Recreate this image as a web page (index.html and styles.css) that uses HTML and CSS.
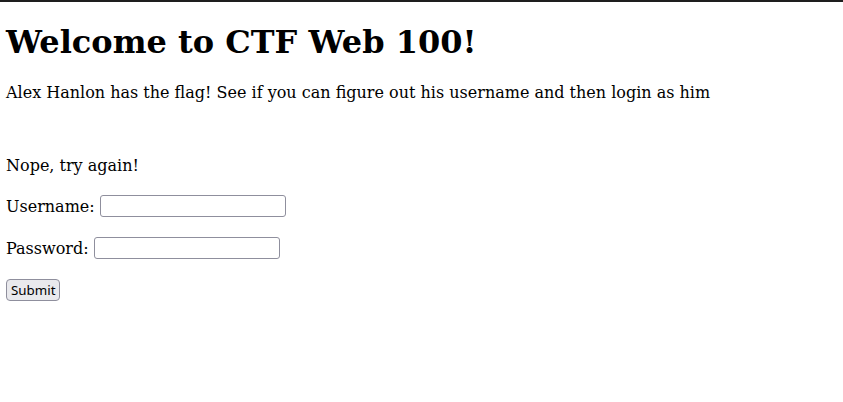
FILE: index.html
```html
<!DOCTYPE html>
<html class="page">
<head>
<meta charset="utf-8">
<title>CTF Web 100</title>
<link rel="stylesheet" href="styles.css">
</head>
<body class="body">
<h1 class="title">Welcome to CTF Web 100!</h1>
<p class="intro">Alex Hanlon has the flag! See if you can figure out his username and then login as him</p>
<p class="msg">Nope, try again!</p>
<form class="login">
<div class="row"><label class="label" for="username">Username:</label><input class="field" type="text" id="username" name="username"></div>
<div class="row"><label class="label" for="password">Password:</label><input class="field" type="password" id="password" name="password"></div>
<div class="row"><button class="submit" type="submit">Submit</button></div>
</form>
</body>
</html>
```
FILE: styles.css
```css
.page {
  border-top: 2px solid #1e1e1e;
  background: #fff;
}
.body {
  margin: 0;
  padding: 0 6px;
  font-family: "DejaVu Serif", serif;
  font-size: 16px;
  color: #000;
  background: #fff;
}
.title {
  margin: 21px 0 0;
  font-size: 32px;
  line-height: 38px;
  font-weight: bold;
}
.intro {
  margin: 22px 0 0;
  line-height: 19px;
}
.msg {
  margin: 54px 0 0;
  line-height: 19px;
}
.login {
  margin: 18px 0 0;
  display: flex;
  flex-direction: column;
  gap: 16px;
}
.row {
  display: flex;
  align-items: center;
  gap: 5px;
  height: 26px;
}
.label {
  line-height: 19px;
}
.field {
  box-sizing: border-box;
  width: 186px;
  height: 22px;
  margin: 0;
  padding: 1px 2px;
  border: 1px solid #8f8f9d;
  border-radius: 3px;
  background: #fff;
}
.submit {
  box-sizing: border-box;
  width: 54px;
  height: 22px;
  margin: 0;
  padding: 0 4px;
  border: 1px solid #8f8f9d;
  border-radius: 4px;
  background: #e9e9ed;
  color: #000;
  font-family: "Noto Sans", "Open Sans", sans-serif;
  font-size: 13.33px;
  line-height: 18px;
}
```
